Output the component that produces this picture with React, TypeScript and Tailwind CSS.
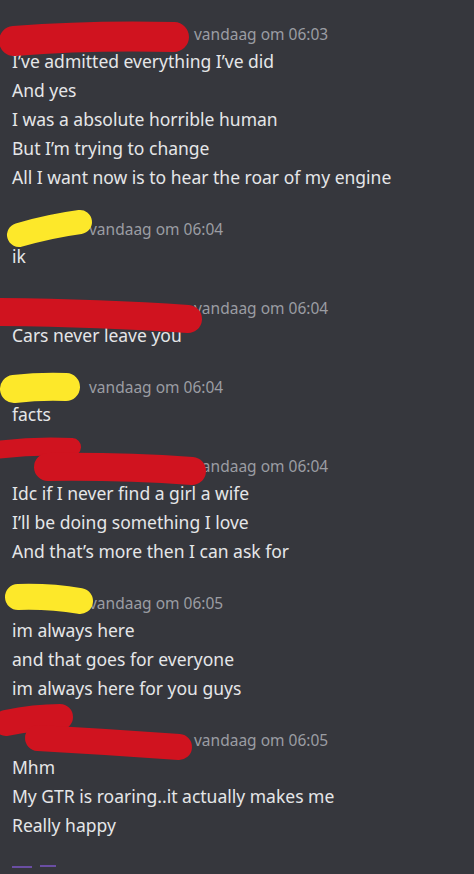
import React from "react";

type Stroke = { d: string; w: number };
type Msg = {
  color: "red" | "yellow";
  time: string;
  lines: string[];
  strokes: Stroke[];
};

const RED = "#d0131f";
const YELLOW = "#fde82a";

const messages: Msg[] = [
  {
    color: "red",
    time: "vandaag om 06:03",
    lines: [
      "I\u2019ve admitted everything I\u2019ve did",
      "And yes",
      "I was a absolute horrible human",
      "But I\u2019m trying to change",
      "All I want now is to hear the roar of my engine",
    ],
    strokes: [{ d: "M14 38 Q90 32 174 34", w: 30 }],
  },
  {
    color: "yellow",
    time: "vandaag om 06:04",
    lines: ["ik"],
    strokes: [{ d: "M19 37 Q50 28 80 24", w: 24 }],
  },
  {
    color: "red",
    time: "vandaag om 06:04",
    lines: ["Cars never leave you"],
    strokes: [{ d: "M-4 35 Q100 36 188 42", w: 28 }],
  },
  {
    color: "yellow",
    time: "vandaag om 06:04",
    lines: ["facts"],
    strokes: [{ d: "M14 33 Q40 30 66 31", w: 28 }],
  },
  {
    color: "red",
    time: "vandaag om 06:04",
    lines: [
      "Idc if I never find a girl a wife",
      "I\u2019ll be doing something I love",
      "And that\u2019s more then I can ask for",
    ],
    strokes: [
      { d: "M-4 15 Q35 10 72 12", w: 18 },
      { d: "M48 32 Q120 31 192 36", w: 28 },
    ],
  },
  {
    color: "yellow",
    time: "vandaag om 06:05",
    lines: [
      "im always here",
      "and that goes for everyone",
      "im always here for you guys",
    ],
    strokes: [{ d: "M18 25 Q50 24 80 29", w: 26 }],
  },
  {
    color: "red",
    time: "vandaag om 06:05",
    lines: [
      "Mhm",
      "My GTR is roaring..it actually makes me",
      "Really happy",
    ],
    strokes: [
      { d: "M6 14 Q35 8 60 8", w: 26 },
      { d: "M38 29 Q110 33 179 38", w: 26 },
    ],
  },
];

function Message({ m, first }: { m: Msg; first: boolean }) {
  const isRed = m.color === "red";
  return (
    <div className={`relative ${first ? "" : "mt-[26px]"}`}>
      <div className="flex h-[23px] items-center">
        <span className={`${isRed ? "w-[174px]" : "w-[69px]"} shrink-0`} />
        <span className="ml-[8px] text-[15.5px] text-[#9b9da3]">{m.time}</span>
      </div>
      <svg
        className="pointer-events-none absolute left-[-12px] top-[-20px] h-[70px] w-[230px] overflow-visible"
        viewBox="0 0 230 70"
      >
        {m.strokes.map((s, i) => (
          <path
            key={i}
            d={s.d}
            fill="none"
            stroke={isRed ? RED : YELLOW}
            strokeWidth={s.w}
            strokeLinecap="round"
            strokeLinejoin="round"
          />
        ))}
      </svg>
      <div className="mt-[1px]">
        {m.lines.map((l, i) => (
          <div key={i} className="h-[29px] text-[17.5px] leading-[29px] text-[#e5e6e8]">
            {l}
          </div>
        ))}
      </div>
    </div>
  );
}

export default function App() {
  return (
    <div
      className="relative min-h-[874px] w-[474px] overflow-hidden bg-[#36373d] px-[12px] pt-[23px]"
      style={{ fontFamily: '"Noto Sans", "Open Sans", sans-serif' }}
    >
      {messages.map((m, i) => (
        <Message key={i} m={m} first={i === 0} />
      ))}
      <div className="mt-[25px] flex items-start gap-[8px]">
        <div className="mt-[1px] h-[2px] w-[20px] bg-[#6a4ea3]" />
        <div className="h-[2px] w-[16px] bg-[#6a4ea3]" />
      </div>
    </div>
  );
}
